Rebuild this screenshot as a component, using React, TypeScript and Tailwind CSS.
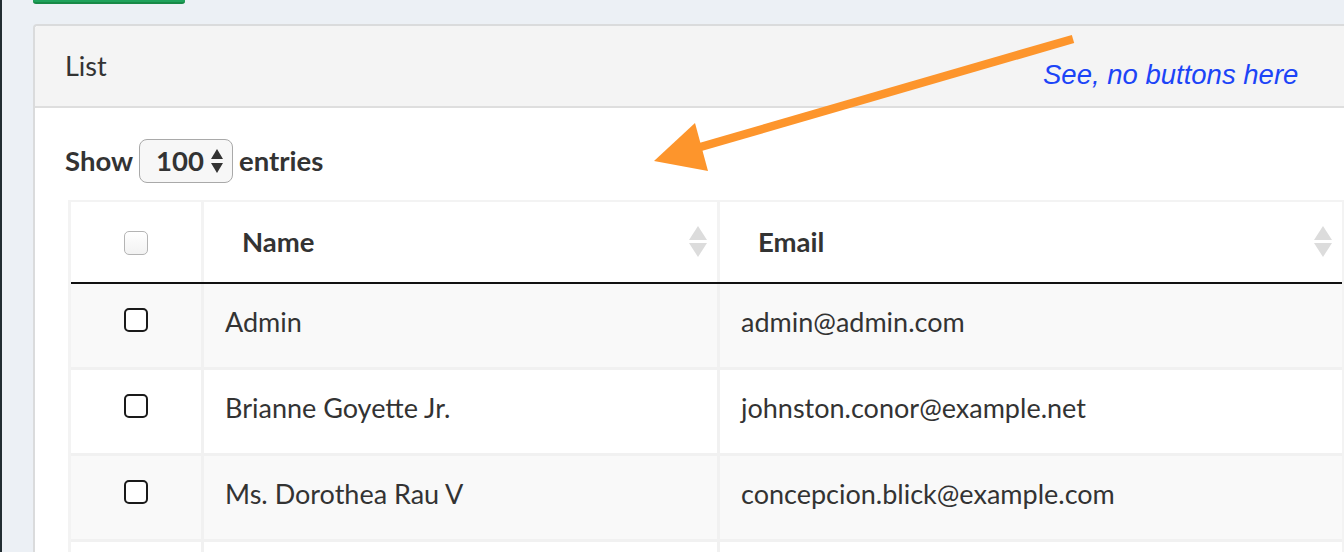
import React from "react";

function SortIcon() {
  return (
    <svg width="18" height="32" viewBox="0 0 18 32" className="shrink-0">
      <polygon points="9,0 18,14 0,14" fill="#dcdcdc" />
      <polygon points="0,17 18,17 9,31" fill="#dcdcdc" />
    </svg>
  );
}

function Check({ head }: { head?: boolean }) {
  return head ? (
    <div className="w-[24px] h-[24px] rounded-[5px] border-[1.5px] border-[#b4b4b4] bg-gradient-to-b from-white to-[#f2f2f2]" />
  ) : (
    <div className="w-[24px] h-[24px] rounded-[5px] border-2 border-[#1a1a1a] bg-white" />
  );
}

export default function App() {
  const rows = [
    { name: "Admin", email: "admin@admin.com", bg: "bg-[#f9f9f9]" },
    { name: "Brianne Goyette Jr.", email: "johnston.conor@example.net", bg: "bg-white" },
    { name: "Ms. Dorothea Rau V", email: "concepcion.blick@example.com", bg: "bg-[#f9f9f9]" },
    { name: "", email: "", bg: "bg-white" },
  ];
  return (
    <div className="relative w-[1344px] h-[552px] overflow-hidden flex bg-[#ecf0f5] text-[#333] font-['Lato','Noto_Sans',sans-serif]">
      <div className="w-[2px] shrink-0 bg-[#222d32]" />
      <div className="flex-1 flex flex-col pl-[31px]">
        <div className="w-[152px] h-[4px] shrink-0 bg-[#1fa25b] border-b-2 border-[#178a47] rounded-b-[3px]" />
        <div className="mt-[20px] flex-1 flex flex-col border-2 border-r-0 border-b-0 border-[#dadbdc] rounded-tl-[4px] bg-white">
          <div className="h-[82px] shrink-0 bg-[#f4f4f4] border-b-2 border-[#dedede] flex items-center pl-[30px] text-[27px] rounded-tl-[3px]">
            List
          </div>
          <div className="flex-1 flex flex-col pl-[30px] pt-[31px]">
            <div className="flex items-center h-[44px] text-[27.5px] font-bold">
              <span>Show</span>
              <div className="ml-[6px] mr-[6px] w-[94px] h-[44px] rounded-[8px] border-[1.5px] border-[#a9a9a9] bg-[#f7f7f7] flex items-center pl-[16px] pr-[9px] justify-between">
                <span>100</span>
                <svg width="12" height="25" viewBox="0 0 12 25">
                  <polygon points="6,0 12,10 0,10" fill="#333" />
                  <polygon points="0,14 12,14 6,24" fill="#333" />
                </svg>
              </div>
              <span>entries</span>
            </div>
            <div className="mt-[17px] ml-[3px] flex flex-col border-t-2 border-l-[3px] border-r-2 border-[#f3f3f3]">
              <div className="flex h-[82px] border-b-2 border-[#111]">
                <div className="w-[133px] shrink-0 border-r-[3px] border-[#f3f3f3] flex items-center justify-center pt-[2px]">
                  <Check head />
                </div>
                <div className="w-[516px] shrink-0 border-r-[3px] border-[#f3f3f3] flex items-center justify-between pl-[38px] pr-[10px] text-[27.5px] font-bold">
                  <span>Name</span>
                  <SortIcon />
                </div>
                <div className="flex-1 flex items-center justify-between pl-[38px] pr-[10px] text-[27.5px] font-bold">
                  <span>Email</span>
                  <SortIcon />
                </div>
              </div>
              {rows.map((r, i) => (
                <div key={i} className={`flex h-[86px] border-b-[3px] border-[#f1f1f1] ${r.bg}`}>
                  <div className="w-[133px] shrink-0 border-r-[3px] border-[#f1f1f1] flex justify-center pt-[24px]">
                    <Check />
                  </div>
                  <div className="w-[516px] shrink-0 border-r-[3px] border-[#f1f1f1] pl-[21px] pt-[22px] text-[27px] leading-[32px]">
                    {r.name}
                  </div>
                  <div className="flex-1 pl-[21px] pt-[22px] text-[27px] leading-[32px]">{r.email}</div>
                </div>
              ))}
            </div>
          </div>
        </div>
      </div>

      <div className="absolute left-[1043px] top-[58px] text-[27.5px] leading-[34px] italic text-[#1c44f7] font-['Liberation_Sans',Arial,sans-serif] whitespace-nowrap">
        See, no buttons here
      </div>
      <svg className="absolute left-0 top-0 pointer-events-none" width="1344" height="552" viewBox="0 0 1344 552">
        <line x1="690" y1="150" x2="1073" y2="39" stroke="#fd952c" strokeWidth="8.5" />
        <polygon points="654,161 695,123 708,171" fill="#fd952c" />
      </svg>
    </div>
  );
}
